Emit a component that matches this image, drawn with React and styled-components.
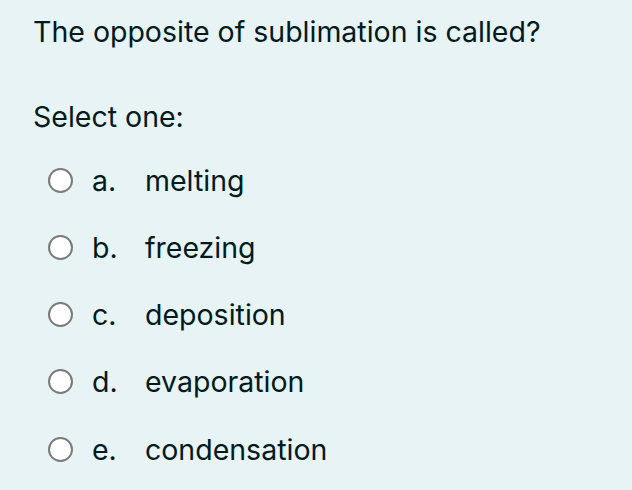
import React from "react";
import styled, { createGlobalStyle } from "styled-components";

const GlobalStyle = createGlobalStyle`
  html, body {
    margin: 0;
    padding: 0;
    background: #e7f3f5;
  }
  body {
    font-family: Inter, "Liberation Sans", sans-serif;
    color: #001a1e;
  }
`;

const Formulation = styled.div`
  width: 632px;
  height: 490px;
  box-sizing: border-box;
  padding: 12px 0 0 33px;
  background: #e7f3f5;
  font-size: 28.5px;
`;

const QuestionText = styled.p`
  margin: 0;
  line-height: 40px;
`;

const Prompt = styled.p`
  margin: 45px 0 0;
  line-height: 40px;
`;

const AnswerList = styled.div`
  display: flex;
  flex-direction: column;
  margin-top: 23px;
  padding-left: 15px;
  gap: 27.3px;
`;

const Answer = styled.label`
  display: flex;
  align-items: center;
  height: 40px;
`;

const Radio = styled.span`
  width: 21px;
  height: 21px;
  border: 2px solid #7a7a7a;
  border-radius: 50%;
  background: #fff;
  flex-shrink: 0;
`;

const Letter = styled.span`
  margin-left: 19px;
  width: 53px;
`;

const answers = [
  ["a.", "melting"],
  ["b.", "freezing"],
  ["c.", "deposition"],
  ["d.", "evaporation"],
  ["e.", "condensation"],
];

export default function App() {
  return (
    <>
      <GlobalStyle />
      <Formulation>
        <QuestionText>The opposite of sublimation is called?</QuestionText>
        <Prompt>Select one:</Prompt>
        <AnswerList>
          {answers.map(([letter, text]) => (
            <Answer key={letter}>
              <Radio />
              <Letter>{letter}</Letter>
              <span>{text}</span>
            </Answer>
          ))}
        </AnswerList>
      </Formulation>
    </>
  );
}
